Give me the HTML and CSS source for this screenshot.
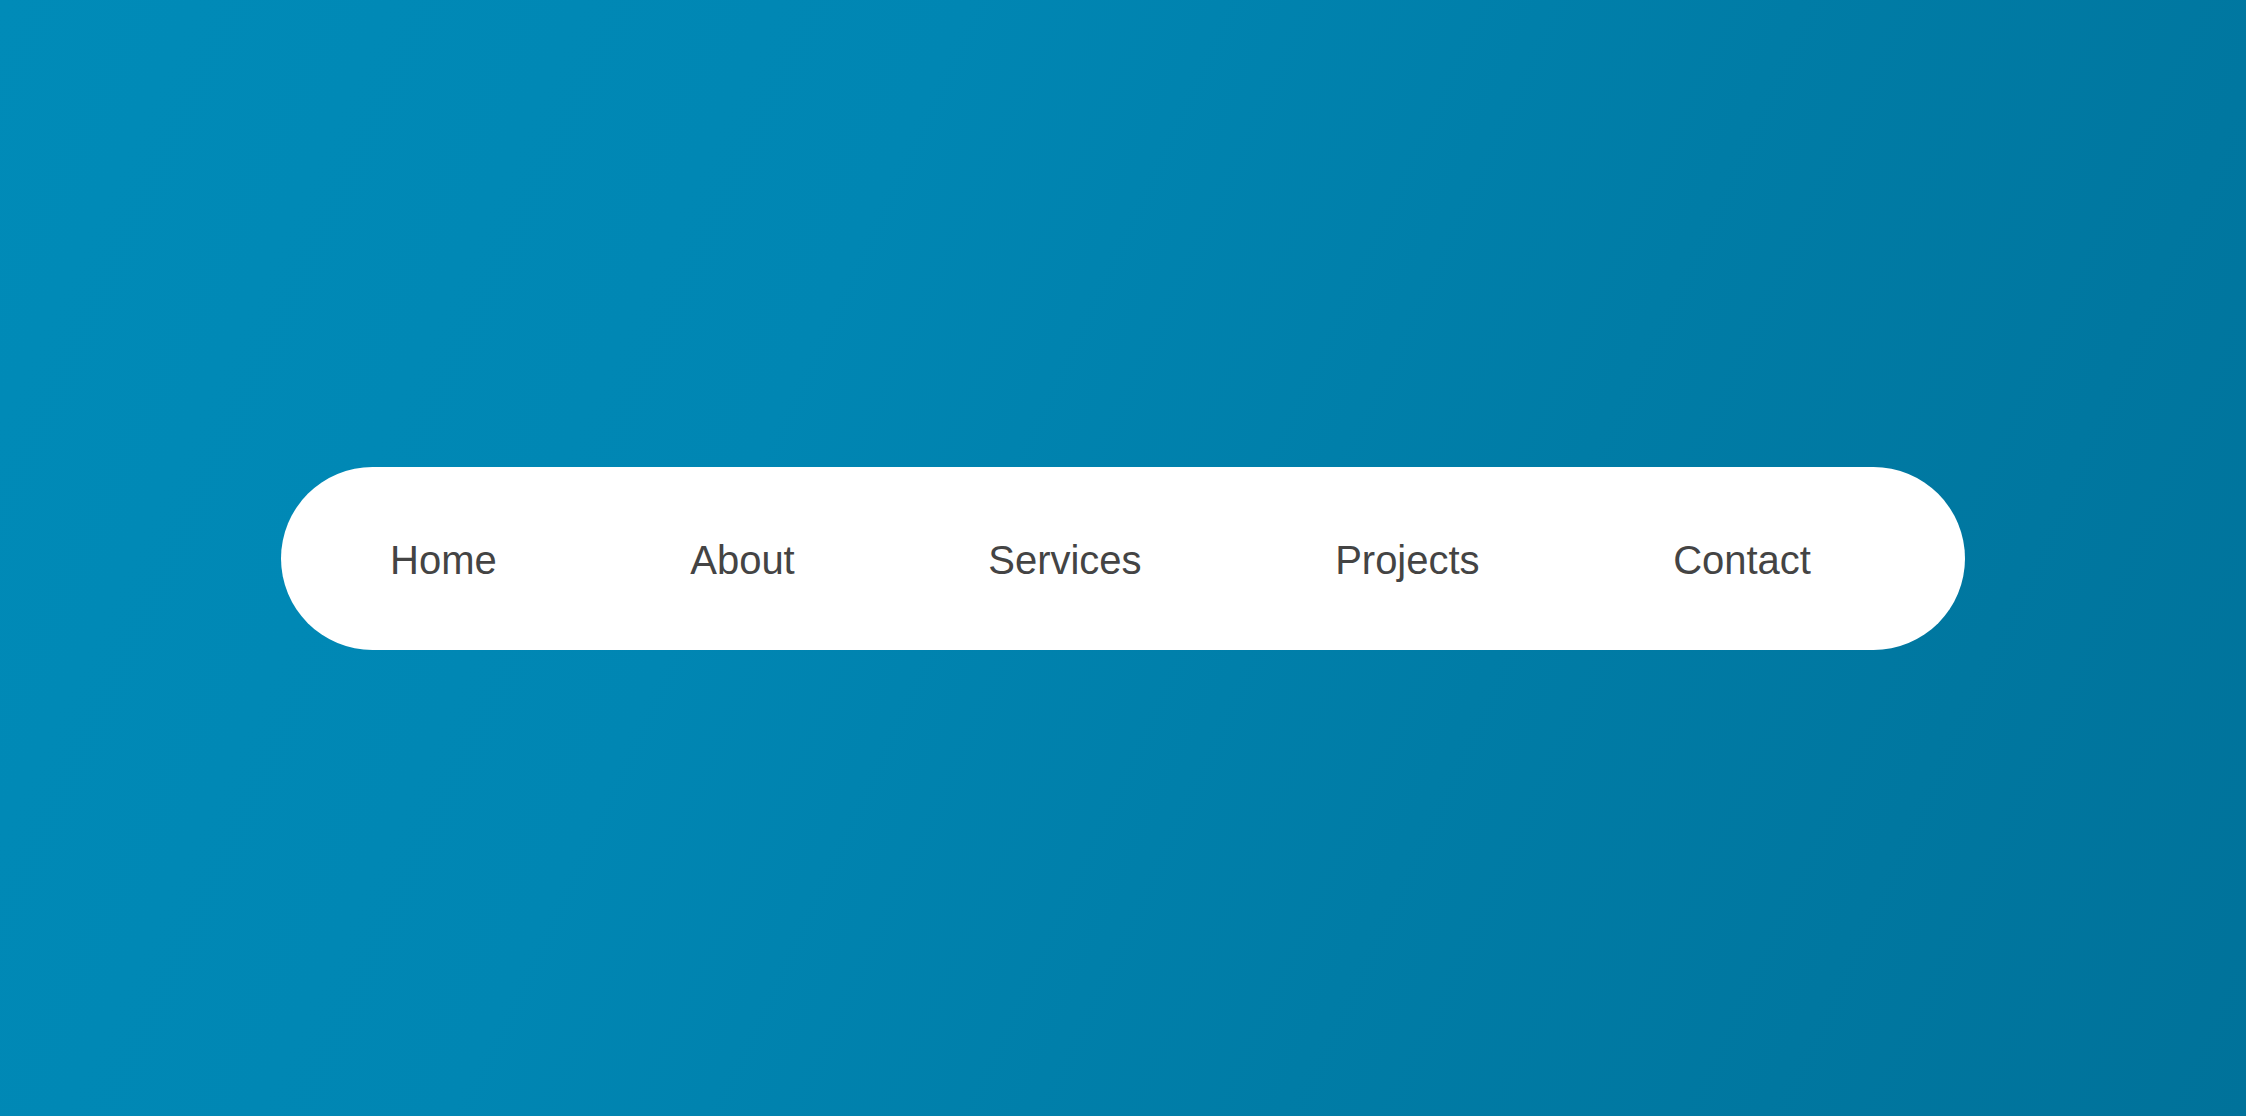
FILE: index.html
```html
<!DOCTYPE html>
<html lang="en">
<head>
<meta charset="utf-8">
<title>Navigation</title>
<link rel="stylesheet" href="styles.css">
</head>
<body>
<nav class="nav">
  <ul class="nav-list">
    <li><a class="nav-link" href="#">Home</a></li>
    <li><a class="nav-link" href="#">About</a></li>
    <li><a class="nav-link" href="#">Services</a></li>
    <li><a class="nav-link" href="#">Projects</a></li>
    <li><a class="nav-link" href="#">Contact</a></li>
  </ul>
</nav>
</body>
</html>
```

FILE: styles.css
```css
html, body {
  margin: 0;
  padding: 0;
  height: 100%;
}

body {
  display: flex;
  align-items: center;
  justify-content: center;
  background: linear-gradient(115deg, #008bb8 0%, #0086b3 35%, #007ca6 65%, #00729a 100%);
  font-family: "Liberation Sans", Arial, Helvetica, sans-serif;
}

.nav {
  width: 1684px;
  height: 183px;
  background: #ffffff;
  border-radius: 92px;
  display: flex;
  align-items: center;
  box-sizing: border-box;
  padding: 4px 154px 0 109px;
}

.nav-list {
  list-style: none;
  margin: 0;
  padding: 0;
  width: 100%;
  display: flex;
  justify-content: space-between;
  align-items: center;
}

.nav-link {
  color: #444444;
  text-decoration: none;
  font-size: 40px;
  line-height: 1;
}
```
